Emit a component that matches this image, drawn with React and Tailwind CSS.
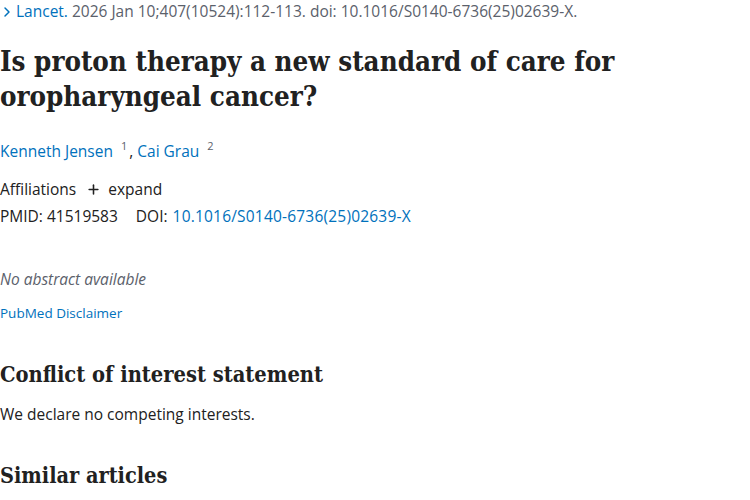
import { ChevronRight, Plus } from 'lucide-react';

const sans = "font-['Open_Sans',sans-serif]";
const serif = "font-['DejaVu_Serif_Condensed','DejaVu_Serif',serif]";

const App = () => {
  return (
    <div className={`w-[750px] h-[500px] overflow-hidden bg-white text-[#212121] ${sans}`}>
      {/* Citation line */}
      <div className="h-[24px] flex items-center text-[15.5px] text-[#5b616b]">
        <ChevronRight className="h-4 w-4 text-[#0071bc] -ml-[1px] mr-[1px]" strokeWidth={2.2} />
        <span className="text-[#0071bc]">Lancet.</span>
        <span className="ml-[4px]">2026 Jan 10;407(10524):112-113. doi: 10.1016/S0140-6736(25)02639-X.</span>
      </div>

      {/* Title */}
      <h1 className={`${serif} mt-[20px] text-[27.5px] leading-[35px] font-bold text-[#212121]`}>
        Is proton therapy a new standard of care for
        <br />
        oropharyngeal cancer?
      </h1>

      {/* Authors */}
      <div className="mt-[26px] text-[15.5px] leading-[22px] flex items-center">
        <span className="text-[#0071bc]">Kenneth Jensen</span>
        <sup className="ml-[6px] px-[2px] bg-[#f1f1f1] text-[11px] text-[#5b616b]">1</sup>
        <span>,&nbsp;</span>
        <span className="text-[#0071bc]">Cai Grau</span>
        <sup className="ml-[6px] px-[2px] bg-[#f1f1f1] text-[11px] text-[#5b616b]">2</sup>
      </div>

      {/* Affiliations */}
      <div className="mt-[16px] text-[15.5px] leading-[22px] flex items-center">
        <span>Affiliations</span>
        <Plus className="h-[15px] w-[15px] ml-[10px] mr-[7px]" strokeWidth={2.5} />
        <span>expand</span>
      </div>
      <div className="mt-[5px] text-[15.5px] leading-[22px] flex items-center">
        <span>PMID: 41519583</span>
        <span className="ml-[18px]">DOI:</span>
        <span className="ml-[5px] text-[#0071bc] tracking-[0.2px]">10.1016/S0140-6736(25)02639-X</span>
      </div>

      {/* Abstract */}
      <p className="mt-[41px] text-[15.5px] leading-[22px] italic text-[#5b616b]">No abstract available</p>
      <p className="mt-[12px] text-[13.5px] leading-[22px] text-[#0071bc]">PubMed Disclaimer</p>

      {/* Conflict */}
      <h2 className={`${serif} mt-[36px] text-[21.7px] leading-[30px] font-bold`}>Conflict of interest statement</h2>
      <p className="mt-[13px] text-[15.5px] leading-[22px]">We declare no competing interests.</p>

      <h2 className={`${serif} mt-[36px] text-[21.5px] leading-[30px] font-bold`}>Similar articles</h2>
    </div>
  );
};

export default App;
